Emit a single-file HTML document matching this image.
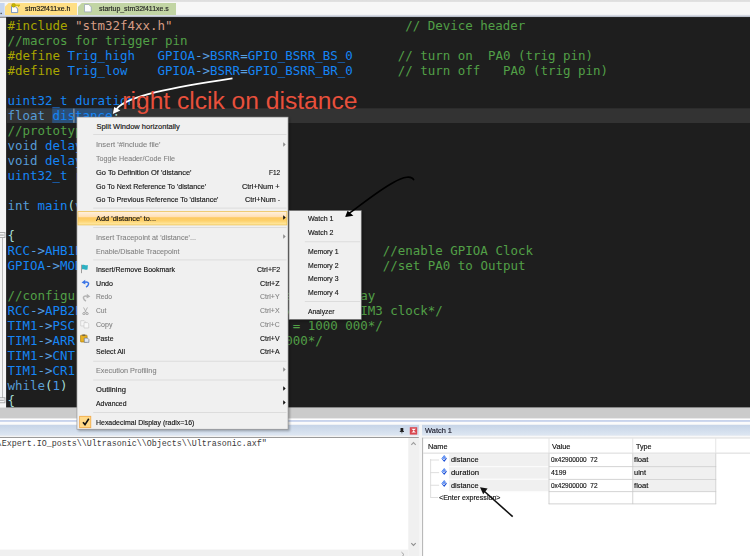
<!DOCTYPE html>
<html lang="en"><head><meta charset="utf-8"><title>Keil uVision - Add distance to Watch 1</title>
<style>
html,body{margin:0;padding:0}
body{width:750px;height:556px;overflow:hidden;position:relative;background:#f0f0f0;font-family:'Liberation Sans',sans-serif}
</style></head><body>
<div style="position:absolute;left:0;top:0;width:750px;height:18px;background:linear-gradient(#dedede 0,#e1e1e1 1.6px,#f7f7f7 2.3px,#f7f7f7 14.3px,#dde1ea 15.2px,#b9bfcb 16.5px,#4a4a4a 17.2px,#1e1e1e 17.7px,#1e1e1e 18px);transform:translate(0px,0px);transform-origin:0 0;"></div>
<div style="position:absolute;left:0;top:0;width:5px;height:12px;background:#c6d6ef;transform:translate(0px,3px) scale(0.92,1);transform-origin:0 0;"></div>
<div style="position:absolute;left:0;top:0;width:2px;height:2px;background:#444;transform:translate(0.5px,12.8px) scale(0.65,0.65);transform-origin:0 0;"></div>
<div style="position:absolute;left:4.8px;top:2.8px;width:72.5px;height:12.4px;background:#ffdf85;clip-path:polygon(4px 0,100% 0,100% 100%,0 100%,0 4px)"></div>
<div style="position:absolute;left:78px;top:2.8px;width:98px;height:12.4px;background:#c2d5a4;clip-path:polygon(4px 0,100% 0,100% 100%,0 100%,0 4px)"></div>
<svg style="position:absolute;left:11.3px;top:2.6px" width="16.7" height="12.6" viewBox="0 0 16.7 12.6"><path d="M0.5 3.5h3.7l2.5 2.5v3.5999999999999996h-6.2z" fill="#fdfdfd" stroke="#5b82c4" stroke-width="0.8"/><circle cx="2.6" cy="2.3" r="1.9" fill="#c9b800" stroke="#9a8c00" stroke-width="0.5"/><rect x="4" y="1.6" width="5" height="1.3" fill="#c9b800"/><rect x="7" y="2.5" width="1.2" height="1.3" fill="#c9b800"/></svg>
<svg style="position:absolute;left:84px;top:1.3px" width="17.3" height="13.9" viewBox="0 0 17.3 13.9"><path d="M0.5 3.5h4.3l2.5 2.5v4.9h-6.8z" fill="#fdfdfd" stroke="#9aa7b5" stroke-width="0.8"/></svg>
<div style="position:absolute;left:0;top:0;width:7px;height:391px;background:#f5f5f5;transform:translate(0px,17.5px) scale(0.88571,0.99795);transform-origin:0 0;"></div>
<div style="position:absolute;left:0;top:0;width:744px;height:391px;background:#1e1e1e;transform:translate(6.1px,17.4px) scale(0.99987,0.99821);transform-origin:0 0;"></div>
<div style="position:absolute;left:0;top:0;width:744px;height:15px;background:#333333;transform:translate(6.1px,108.3px) scale(0.99987,0.98);transform-origin:0 0;"></div>
<div style="position:absolute;left:0;top:0;width:60px;height:15px;background:#2b4f77;transform:translate(52.2px,108.3px) scale(1,0.98);transform-origin:0 0;"></div>
<div style="position:absolute;left:0;top:0;width:1px;height:15px;background:#a8a8a8;transform:translate(73.4px,108.6px) scale(1,0.94667);transform-origin:0 0;"></div>
<div style="position:absolute;left:0;top:0;width:1px;height:160px;background:#b4b4b4;transform:translate(2.1px,238px) scale(0.9,1);transform-origin:0 0;"></div>
<div style="position:absolute;left:0;top:0;width:6px;height:6px;background:#a6a6a6;transform:translate(0px,232.1px) scale(0.9,0.98333);transform-origin:0 0;"></div>
<div style="position:absolute;left:0;top:0;width:5px;height:5px;background:#f5f5f5;transform:translate(0px,233px) scale(0.9,0.82);transform-origin:0 0;"></div>
<div style="position:absolute;left:0;top:0;width:4px;height:1px;background:#9a9a9a;transform:translate(0px,234.6px) scale(0.95,0.9);transform-origin:0 0;"></div>
<div style="position:absolute;left:0;top:0;width:6px;height:6px;background:#a6a6a6;transform:translate(0px,397.3px) scale(0.9,0.98333);transform-origin:0 0;"></div>
<div style="position:absolute;left:0;top:0;width:5px;height:5px;background:#f5f5f5;transform:translate(0px,398.2px) scale(0.9,0.82);transform-origin:0 0;"></div>
<div style="position:absolute;left:0;top:0;width:4px;height:1px;background:#9a9a9a;transform:translate(0px,399.8px) scale(0.95,0.9);transform-origin:0 0;"></div>
<pre style="position:absolute;left:7.4px;top:18.0px;margin:0;font:12.47px/15.0px 'DejaVu Sans Mono', 'Liberation Mono', monospace;color:#dcdcdc;white-space:pre"><span style="color:#a9a600">#include </span><span style="color:#d69d85">&quot;stm32f4xx.h&quot;</span>                               <span style="color:#52a047">// Device header</span>
<span style="color:#52a047">//macros for trigger pin</span>
<span style="color:#a9a600">#define </span><span style="color:#1585f5">Trig_high   GPIOA</span><span style="color:#5aa0e0">-&gt;</span><span style="color:#1585f5">BSRR</span><span style="color:#5aa0e0">=</span><span style="color:#1585f5">GPIO_BSRR_BS_0</span>      <span style="color:#52a047">// turn on  PA0 (trig pin)</span>
<span style="color:#a9a600">#define </span><span style="color:#1585f5">Trig_low    GPIOA</span><span style="color:#5aa0e0">-&gt;</span><span style="color:#1585f5">BSRR</span><span style="color:#5aa0e0">=</span><span style="color:#1585f5">GPIO_BSRR_BR_0</span>      <span style="color:#52a047">// turn off   PA0 (trig pin)</span>

<span style="color:#1585f5">uint32_t duration</span><span style="color:#a4dcd4">;</span>
<span style="color:#569cd6">float </span><span style="color:#1585f5">distance</span><span style="color:#a4dcd4">;</span>
<span style="color:#52a047">//prototypes of the used functions</span>
<span style="color:#569cd6">void </span><span style="color:#1585f5">delaymS</span><span style="color:#a4dcd4">(</span><span style="color:#1585f5">uint32_t ms</span><span style="color:#a4dcd4">);</span>
<span style="color:#569cd6">void </span><span style="color:#1585f5">delayuS</span><span style="color:#a4dcd4">(</span><span style="color:#1585f5">uint32_t us</span><span style="color:#a4dcd4">);</span>
<span style="color:#1585f5">uint32_t read_echo</span><span style="color:#a4dcd4">(</span><span style="color:#1585f5">uint32_t timeout</span><span style="color:#a4dcd4">);</span>

<span style="color:#569cd6">int </span><span style="color:#1585f5">main</span><span style="color:#a4dcd4">(</span><span style="color:#569cd6">void</span><span style="color:#a4dcd4">)</span>

<span style="color:#a4dcd4">{</span>
<span style="color:#1585f5">RCC</span><span style="color:#5aa0e0">-&gt;</span><span style="color:#1585f5">AHB1ENR </span><span style="color:#5aa0e0">|=</span><span style="color:#1585f5">RCC_AHB1ENR_GPIOAEN</span><span style="color:#a4dcd4">;</span>               <span style="color:#52a047">//enable GPIOA Clock</span>
<span style="color:#1585f5">GPIOA</span><span style="color:#5aa0e0">-&gt;</span><span style="color:#1585f5">MODER </span><span style="color:#5aa0e0">|=</span><span style="color:#a4dcd4">(</span><span style="color:#4a9ae8">1</span><span style="color:#5aa0e0">&lt;&lt;</span><span style="color:#4a9ae8">0</span><span style="color:#a4dcd4">);</span>                            <span style="color:#52a047">//set PA0 to Output</span>

<span style="color:#52a047">//configure Timer1 to generate microseconds delay</span>
<span style="color:#1585f5">RCC</span><span style="color:#5aa0e0">-&gt;</span><span style="color:#1585f5">APB2ENR </span><span style="color:#5aa0e0">|=</span><span style="color:#1585f5">RCC_APB2ENR_TIM1EN</span><span style="color:#a4dcd4">;</span>   <span style="color:#52a047">/*Enable TIM3 clock*/</span>
<span style="color:#1585f5">TIM1</span><span style="color:#5aa0e0">-&gt;</span><span style="color:#1585f5">PSC </span><span style="color:#5aa0e0">= </span><span style="color:#4a9ae8">16 </span><span style="color:#5aa0e0">-</span><span style="color:#4a9ae8">1</span><span style="color:#a4dcd4">;</span>  <span style="color:#52a047">/* 16 000 000 /16 = 1000 000*/</span>
<span style="color:#1585f5">TIM1</span><span style="color:#5aa0e0">-&gt;</span><span style="color:#1585f5">ARR </span><span style="color:#5aa0e0">= </span><span style="color:#4a9ae8">1000000</span><span style="color:#a4dcd4">;</span>   <span style="color:#52a047">/* 1 s = 1000 000*/</span>
<span style="color:#1585f5">TIM1</span><span style="color:#5aa0e0">-&gt;</span><span style="color:#1585f5">CNT </span><span style="color:#5aa0e0">=</span><span style="color:#4a9ae8">0</span><span style="color:#a4dcd4">;</span>
<span style="color:#1585f5">TIM1</span><span style="color:#5aa0e0">-&gt;</span><span style="color:#1585f5">CR1 </span><span style="color:#5aa0e0">=</span><span style="color:#4a9ae8">1</span><span style="color:#a4dcd4">;</span>
<span style="color:#569cd6">while</span><span style="color:#a4dcd4">(</span><span style="color:#4a9ae8">1</span><span style="color:#a4dcd4">)</span>
<span style="color:#a4dcd4">{</span></pre>
<div style="position:absolute;left:0;top:0;width:750px;height:11px;background:#cbcbcb;transform:translate(0px,407.6px) scale(1,0.99091);transform-origin:0 0;"></div>
<div style="position:absolute;left:0;top:0;width:750px;height:4px;background:linear-gradient(#f2f2f4 0,#ffffff 20%,#ffffff 48%,#c2cfea 60%,#c6d2ec 100%);transform:translate(0px,418.5px) scale(1,0.85);transform-origin:0 0;"></div>
<div style="position:absolute;left:0;top:0;width:750px;height:3px;background:#fbfbfb;transform:translate(0px,421.9px) scale(1,0.96667);transform-origin:0 0;"></div>
<div style="position:absolute;left:0;top:0;width:420px;height:11px;background:linear-gradient(#c6d4e7,#dee7f2);transform:translate(0px,424.8px) scale(0.99905,1);transform-origin:0 0;"></div>
<div style="position:absolute;left:0;top:0;width:420px;height:2px;background:#f4f4f4;transform:translate(0px,435.8px) scale(0.99905,0.65);transform-origin:0 0;"></div>
<div style="position:absolute;left:0;top:0;width:419px;height:2px;background:linear-gradient(#858585,#b0b0b0);transform:translate(0px,437.1px) scale(0.99952,0.7);transform-origin:0 0;"></div>
<div style="position:absolute;left:0;top:0;width:420px;height:118px;background:#ffffff;transform:translate(0px,438px) scale(0.99857,1);transform-origin:0 0;"></div>
<div style="position:absolute;left:0;top:0;width:11px;height:118px;background:#f0f0f0;transform:translate(408.3px,438px) scale(0.98182,1);transform-origin:0 0;"></div>
<div style="position:absolute;left:0;top:0;width:4px;height:132px;background:#f6f6f6;transform:translate(419.1px,424.4px) scale(0.8,1);transform-origin:0 0;"></div>
<div style="position:absolute;left:0;top:0;width:328px;height:11px;background:linear-gradient(#c6d4e7,#dee7f2);transform:translate(422px,424.8px);transform-origin:0 0;"></div>
<div style="position:absolute;left:0;top:0;width:328px;height:2px;background:#f8f8f8;transform:translate(422px,435.8px);transform-origin:0 0;"></div>
<div style="position:absolute;left:0;top:0;width:329px;height:119px;background:#ffffff;transform:translate(421.8px,437.6px) scale(0.99757,1);transform-origin:0 0;"></div>
<div style="position:absolute;left:0;top:0;width:329px;height:1px;background:#d2d2d2;transform:translate(421.8px,437.6px) scale(0.99757,0.8);transform-origin:0 0;"></div>
<div style="position:absolute;left:0;top:0;width:1px;height:119px;background:#b2b2b2;transform:translate(422.1px,437.8px);transform-origin:0 0;"></div>
<svg style="position:absolute;left:398px;top:426px" width="8" height="9" viewBox="0 0 8 9"><rect x="2.5" y="2" width="2.8" height="3.2" rx="0.6" fill="#1c1c1c"/><rect x="1.8" y="5" width="4.2" height="0.9" fill="#1c1c1c"/><rect x="3.55" y="5.9" width="0.7" height="1.5" fill="#333"/></svg>
<div style="position:absolute;left:0;top:0;width:8px;height:8px;background:#d9484f;transform:translate(409.8px,427.2px) scale(0.925,0.925);transform-origin:0 0;"></div>
<svg style="position:absolute;left:409.8px;top:427.2px" width="7.4" height="7.4" viewBox="0 0 7.4 7.4"><path d="M1.4 1.8h4.6L3.7 3.7zM1.4 5.6h4.6L3.7 3.7z" fill="#fff"/></svg>
<div style="position:absolute;left:0;top:0;width:409px;height:7px;background:#f0f0f0;transform:translate(0px,549.6px) scale(0.99829,0.91429);transform-origin:0 0;"></div>
<svg style="position:absolute;left:409.7px;top:440.9px" width="7" height="5" viewBox="0 0 7 5"><path d="M1.3 3.8 L3.5 1.6 L5.7 3.8" fill="none" stroke="#9c9c9c" stroke-width="1.1"/></svg>
<svg style="position:absolute;left:409.7px;top:541.6px" width="7" height="5" viewBox="0 0 7 5"><path d="M1.3 1.2 L3.5 3.4 L5.7 1.2" fill="none" stroke="#8e8e8e" stroke-width="1.1"/></svg>
<svg style="position:absolute;left:400.3px;top:551.3px" width="6" height="7" viewBox="0 0 6 7"><path d="M1.5 1.2 L4 3.6 L1.5 6" fill="none" stroke="#a0a0a0" stroke-width="1"/></svg>
<div style="position:absolute;left:0;top:0;width:327px;height:1px;background:#cfcfcf;transform:translate(423.2px,452.7px) scale(1,0.8);transform-origin:0 0;"></div>
<div style="position:absolute;left:0;top:0;width:1px;height:15px;background:#dedede;transform:translate(548.6px,438.4px) scale(0.8,0.96667);transform-origin:0 0;"></div>
<div style="position:absolute;left:0;top:0;width:1px;height:15px;background:#dedede;transform:translate(632.4px,438.4px) scale(0.8,0.96667);transform-origin:0 0;"></div>
<div style="position:absolute;left:0;top:0;width:1px;height:15px;background:#dedede;transform:translate(715.4px,438.4px) scale(0.8,0.96667);transform-origin:0 0;"></div>
<div style="position:absolute;left:0;top:0;width:100px;height:12px;background:#f0f0f0;transform:translate(449px,454.1px) scale(0.996,1);transform-origin:0 0;"></div>
<div style="position:absolute;left:0;top:0;width:83px;height:12px;background:#f0f0f0;transform:translate(633.2px,454.1px) scale(0.99036,1);transform-origin:0 0;"></div>
<div style="position:absolute;left:0;top:0;width:100px;height:12px;background:#f0f0f0;transform:translate(449px,466.9px) scale(0.996,0.98333);transform-origin:0 0;"></div>
<div style="position:absolute;left:0;top:0;width:83px;height:12px;background:#f0f0f0;transform:translate(633.2px,466.9px) scale(0.99036,0.98333);transform-origin:0 0;"></div>
<div style="position:absolute;left:0;top:0;width:100px;height:12px;background:#f0f0f0;transform:translate(449px,479.5px) scale(0.996,0.96667);transform-origin:0 0;"></div>
<div style="position:absolute;left:0;top:0;width:83px;height:12px;background:#f0f0f0;transform:translate(633.2px,479.5px) scale(0.99036,0.96667);transform-origin:0 0;"></div>
<div style="position:absolute;left:0;top:0;width:168px;height:1px;background:#c8c8c8;transform:translate(548.6px,466.3px) scale(0.99762,0.8);transform-origin:0 0;"></div>
<div style="position:absolute;left:0;top:0;width:168px;height:1px;background:#c8c8c8;transform:translate(548.6px,478.9px) scale(0.99762,0.8);transform-origin:0 0;"></div>
<div style="position:absolute;left:0;top:0;width:168px;height:1px;background:#c8c8c8;transform:translate(548.6px,491.3px) scale(0.99762,0.8);transform-origin:0 0;"></div>
<div style="position:absolute;left:0;top:0;width:168px;height:1px;background:#c8c8c8;transform:translate(548.6px,503.5px) scale(0.99762,0.8);transform-origin:0 0;"></div>
<div style="position:absolute;left:0;top:0;width:100px;height:1px;background:#fbfbfb;transform:translate(449px,466.2px) scale(0.996,1);transform-origin:0 0;"></div>
<div style="position:absolute;left:0;top:0;width:100px;height:1px;background:#fbfbfb;transform:translate(449px,478.8px) scale(0.996,1);transform-origin:0 0;"></div>
<div style="position:absolute;left:0;top:0;width:100px;height:1px;background:#fbfbfb;transform:translate(449px,491.2px) scale(0.996,1);transform-origin:0 0;"></div>
<div style="position:absolute;left:0;top:0;width:1px;height:51px;background:#c8c8c8;transform:translate(548.6px,453.5px) scale(0.8,0.99216);transform-origin:0 0;"></div>
<div style="position:absolute;left:0;top:0;width:1px;height:51px;background:#c8c8c8;transform:translate(632.4px,453.5px) scale(0.8,0.99216);transform-origin:0 0;"></div>
<div style="position:absolute;left:0;top:0;width:1px;height:51px;background:#c8c8c8;transform:translate(715.4px,453.5px) scale(0.8,0.99216);transform-origin:0 0;"></div>
<div style="position:absolute;left:0;top:0;width:1px;height:39px;background:#d6d6d6;transform:translate(430.3px,459px) scale(0.8,0.98718);transform-origin:0 0;"></div>
<div style="position:absolute;left:0;top:0;width:9px;height:1px;background:#d6d6d6;transform:translate(430.3px,459.6px) scale(0.97778,0.8);transform-origin:0 0;"></div>
<div style="position:absolute;left:0;top:0;width:9px;height:1px;background:#d6d6d6;transform:translate(430.3px,472.3px) scale(0.97778,0.8);transform-origin:0 0;"></div>
<div style="position:absolute;left:0;top:0;width:9px;height:1px;background:#d6d6d6;transform:translate(430.3px,484.8px) scale(0.97778,0.8);transform-origin:0 0;"></div>
<div style="position:absolute;left:0;top:0;width:8px;height:1px;background:#d6d6d6;transform:translate(430.3px,497.1px) scale(0.975,0.8);transform-origin:0 0;"></div>
<svg style="position:absolute;left:440.6px;top:455px" width="6.4" height="7.4" viewBox="0 0 6.4 7.4"><path d="M3.2 0.3 L5.9 3.4 L3.2 6.9 L0.5 3.4z" fill="#1a4fd6"/><path d="M3.2 0.3 L4.6 1.9 L1.6 4.6 L0.5 3.4z" fill="#6c9cf8"/><path d="M2 3.6 L3 4.9 L4.8 2.4" fill="none" stroke="#fff" stroke-width="0.9"/></svg>
<svg style="position:absolute;left:440.6px;top:467.5px" width="6.4" height="7.4" viewBox="0 0 6.4 7.4"><path d="M3.2 0.3 L5.9 3.4 L3.2 6.9 L0.5 3.4z" fill="#1a4fd6"/><path d="M3.2 0.3 L4.6 1.9 L1.6 4.6 L0.5 3.4z" fill="#6c9cf8"/><path d="M2 3.6 L3 4.9 L4.8 2.4" fill="none" stroke="#fff" stroke-width="0.9"/></svg>
<svg style="position:absolute;left:440.6px;top:480.2px" width="6.4" height="7.4" viewBox="0 0 6.4 7.4"><path d="M3.2 0.3 L5.9 3.4 L3.2 6.9 L0.5 3.4z" fill="#1a4fd6"/><path d="M3.2 0.3 L4.6 1.9 L1.6 4.6 L0.5 3.4z" fill="#6c9cf8"/><path d="M2 3.6 L3 4.9 L4.8 2.4" fill="none" stroke="#fff" stroke-width="0.9"/></svg>
<div style="position:absolute;left:0;top:0;width:212px;height:313px;background:rgba(0,0,0,0.28);transform:translate(78.1px,118.3px) scale(0.99906,0.99936);transform-origin:0 0;filter:blur(1.2px)"></div>
<div style="position:absolute;left:0;top:0;width:212px;height:313px;background:#9c9c9c;transform:translate(76.6px,116.8px) scale(0.99906,0.99936);transform-origin:0 0;"></div>
<div style="position:absolute;left:0;top:0;width:211px;height:312px;background:#f0f0f0;transform:translate(77.3px,117.5px) scale(0.99716,0.99808);transform-origin:0 0;"></div>
<div style="position:absolute;left:0;top:0;width:210px;height:15px;background:#efc255;transform:translate(77.5px,211.2px) scale(0.99905,0.94);transform-origin:0 0;"></div>
<div style="position:absolute;left:0;top:0;width:209px;height:13px;background:linear-gradient(#ffefdc 0,#ffe0b4 38%,#fdc962 46%,#fdd16c 70%,#ffeaa4 100%);transform:translate(78.3px,212px) scale(0.99617,0.96154);transform-origin:0 0;"></div>
<svg style="position:absolute;left:283px;top:141.7px" width="3" height="5" viewBox="0 0 3 5"><path d="M0.2 0.3 L2.7 2.5 L0.2 4.7z" fill="#8c8c8c"/></svg>
<svg style="position:absolute;left:283px;top:215.39999999999998px" width="3" height="5" viewBox="0 0 3 5"><path d="M0.2 0.3 L2.7 2.5 L0.2 4.7z" fill="#111"/></svg>
<svg style="position:absolute;left:283px;top:234.2px" width="3" height="5" viewBox="0 0 3 5"><path d="M0.2 0.3 L2.7 2.5 L0.2 4.7z" fill="#8c8c8c"/></svg>
<svg style="position:absolute;left:283px;top:367.4px" width="3" height="5" viewBox="0 0 3 5"><path d="M0.2 0.3 L2.7 2.5 L0.2 4.7z" fill="#8c8c8c"/></svg>
<svg style="position:absolute;left:283px;top:386.2px" width="3" height="5" viewBox="0 0 3 5"><path d="M0.2 0.3 L2.7 2.5 L0.2 4.7z" fill="#111"/></svg>
<svg style="position:absolute;left:283px;top:399.9px" width="3" height="5" viewBox="0 0 3 5"><path d="M0.2 0.3 L2.7 2.5 L0.2 4.7z" fill="#111"/></svg>
<div style="position:absolute;left:0;top:0;width:194px;height:1px;background:#d7d7d7;transform:translate(93.2px,134px) scale(0.99639,0.8);transform-origin:0 0;"></div>
<div style="position:absolute;left:0;top:0;width:194px;height:1px;background:#d7d7d7;transform:translate(93.2px,207.7px) scale(0.99639,0.8);transform-origin:0 0;"></div>
<div style="position:absolute;left:0;top:0;width:194px;height:1px;background:#d7d7d7;transform:translate(93.2px,227.1px) scale(0.99639,0.8);transform-origin:0 0;"></div>
<div style="position:absolute;left:0;top:0;width:194px;height:1px;background:#d7d7d7;transform:translate(93.2px,259.5px) scale(0.99639,0.8);transform-origin:0 0;"></div>
<div style="position:absolute;left:0;top:0;width:194px;height:1px;background:#d7d7d7;transform:translate(93.2px,360.8px) scale(0.99639,0.8);transform-origin:0 0;"></div>
<div style="position:absolute;left:0;top:0;width:194px;height:1px;background:#d7d7d7;transform:translate(93.2px,379.6px) scale(0.99639,0.8);transform-origin:0 0;"></div>
<div style="position:absolute;left:0;top:0;width:194px;height:1px;background:#d7d7d7;transform:translate(93.2px,412.2px) scale(0.99639,0.8);transform-origin:0 0;"></div>
<svg style="position:absolute;left:80.2px;top:264.4px" width="9.2" height="10.1" viewBox="0 0 10 11"><rect x="1.2" y="0.8" width="0.9" height="9.2" fill="#8a8a8a"/><path d="M2.2 1 C4 0.2 5.5 2 8.6 1.2 L8.2 6 C5.6 6.8 4 5 2.2 5.8z" fill="#2cb0c2"/></svg>
<svg style="position:absolute;left:80.5px;top:278.8px" width="10" height="9" viewBox="0 0 10 9"><g><path d="M3.2 3.4 C6.2 2.2 8.2 3.6 7.4 5.6 C7 6.8 6 7.6 5 8" fill="none" stroke="#3a74e6" stroke-width="1.5"/><path d="M0.6 3.6 L4.2 0.8 L4.4 5.4z" fill="#3a74e6"/></g></svg>
<svg style="position:absolute;left:80.5px;top:292.6px" width="10" height="9" viewBox="0 0 10 9"><g transform="translate(10,0) scale(-1,1)"><path d="M3.2 3.4 C6.2 2.2 8.2 3.6 7.4 5.6 C7 6.8 6 7.6 5 8" fill="none" stroke="#b4b4b4" stroke-width="1.5"/><path d="M0.6 3.6 L4.2 0.8 L4.4 5.4z" fill="#b4b4b4"/></g></svg>
<svg style="position:absolute;left:81.7px;top:306.6px" width="7" height="8.8" viewBox="0 0 8 10"><path d="M1.8 0.5 L5 6.5 M6.2 0.5 L3 6.5" stroke="#aaaaaa" stroke-width="1" fill="none"/><circle cx="2.2" cy="7.6" r="1.3" fill="none" stroke="#9c9c9c" stroke-width="1"/><circle cx="5.8" cy="7.6" r="1.3" fill="none" stroke="#9c9c9c" stroke-width="1"/></svg>
<svg style="position:absolute;left:80.1px;top:320.3px" width="9.6" height="8.7" viewBox="0 0 11 10"><path d="M0.8 0.8h4l1.4 1.4v4.6h-5.4z" fill="#f6f6f6" stroke="#c4c4c4" stroke-width="0.7"/><path d="M4.6 3h4l1.4 1.4v4.8h-5.4z" fill="#f8f8f8" stroke="#c4c4c4" stroke-width="0.7"/></svg>
<svg style="position:absolute;left:80.1px;top:333.8px" width="9.8" height="8.9" viewBox="0 0 11 10"><rect x="0.6" y="1.4" width="7.4" height="7.6" rx="0.6" fill="#e8b020" stroke="#a87808" stroke-width="0.7"/><rect x="2.6" y="0.5" width="3.4" height="1.8" fill="#7a6a40"/><path d="M4.8 4.6h3.6l1.6 1.6v3.2h-5.2z" fill="#dfe6f2" stroke="#5a6a86" stroke-width="0.7"/></svg>
<div style="position:absolute;left:0;top:0;width:12px;height:13px;background:#f0a84a;transform:translate(79.2px,415.9px) scale(1,0.93846);transform-origin:0 0;"></div>
<div style="position:absolute;left:0;top:0;width:11px;height:11px;background:#ffd987;transform:translate(80px,416.7px) scale(0.94545,0.96364);transform-origin:0 0;"></div>
<svg style="position:absolute;left:81.5px;top:418px" width="8" height="8" viewBox="0 0 8 8"><path d="M1 4.2 L3 6.6 L6.8 0.8" fill="none" stroke="#111" stroke-width="1.6"/></svg>
<div style="position:absolute;left:0;top:0;width:73px;height:110px;background:rgba(0,0,0,0.28);transform:translate(290.3px,211.8px) scale(0.99726,0.99455);transform-origin:0 0;filter:blur(1.2px)"></div>
<div style="position:absolute;left:0;top:0;width:73px;height:110px;background:#9c9c9c;transform:translate(288.8px,210.3px) scale(0.99726,0.99455);transform-origin:0 0;"></div>
<div style="position:absolute;left:0;top:0;width:72px;height:108px;background:#f0f0f0;transform:translate(289.5px,211px) scale(0.99167,1);transform-origin:0 0;"></div>
<div style="position:absolute;left:0;top:0;width:56px;height:1px;background:#d7d7d7;transform:translate(304.8px,241.4px) scale(0.98929,0.8);transform-origin:0 0;"></div>
<div style="position:absolute;left:0;top:0;width:56px;height:1px;background:#d7d7d7;transform:translate(304.8px,301.1px) scale(0.98929,0.8);transform-origin:0 0;"></div>
<svg style="position:absolute;left:0;top:0" width="750" height="556" viewBox="0 0 750 556"><path d="M232.5 78.4 C172.5 87.4 127 96 116.5 109" fill="none" stroke="#fff" stroke-width="1.7"/><path d="M112.8 113.9 L114.2 107 L120.4 110.4z" fill="#fff"/><path d="M413.9 180.2 C412 175.5 404 176 392.9 182.7 C378 191 362 204 349 213.5" fill="none" stroke="#000" stroke-width="1.6"/><path d="M345.1 217 L347.6 210.8 L353.4 215.8z" fill="#000"/><path d="M512.7 516.7 L484 491" fill="none" stroke="#111" stroke-width="1.6"/><path d="M480 487.3 L487.6 488.6 L483.2 494.2z" fill="#111"/></svg>
<div style="position:absolute;left:25.3px;top:4.33px;font:normal 7.5px 'Liberation Sans', sans-serif;line-height:9.75px;color:#111;white-space:pre;transform:scaleX(0.9334);transform-origin:0 0;-webkit-text-stroke:0.15px #111;">stm32f411xe.h</div>
<div style="position:absolute;left:98.7px;top:4.33px;font:normal 7.5px 'Liberation Sans', sans-serif;line-height:9.75px;color:#222;white-space:pre;transform:scaleX(0.9266);transform-origin:0 0;-webkit-text-stroke:0.15px #222;">startup_stm32f411xe.s</div>
<div style="position:absolute;left:425.2px;top:426.43px;font:normal 7.5px 'Liberation Sans', sans-serif;line-height:9.75px;color:#1a1a2a;white-space:pre;transform:scaleX(0.9914);transform-origin:0 0;-webkit-text-stroke:0.15px #1a1a2a;">Watch 1</div>
<div style="position:absolute;left:-3.2px;top:438.57px;font:normal 8.33px 'Liberation Mono', monospace;line-height:10.83px;color:#3a3a3a;white-space:pre;">\Expert.IO_posts\\Ultrasonic\\Objects\\Ultrasonic.axf&quot;</div>
<div style="position:absolute;left:427.5px;top:442.43px;font:normal 7.5px 'Liberation Sans', sans-serif;line-height:9.75px;color:#111;white-space:pre;transform:scaleX(0.9742);transform-origin:0 0;-webkit-text-stroke:0.15px #111;">Name</div>
<div style="position:absolute;left:552.2px;top:442.43px;font:normal 7.5px 'Liberation Sans', sans-serif;line-height:9.75px;color:#111;white-space:pre;transform:scaleX(0.9925);transform-origin:0 0;-webkit-text-stroke:0.15px #111;">Value</div>
<div style="position:absolute;left:635.5px;top:442.43px;font:normal 7.5px 'Liberation Sans', sans-serif;line-height:9.75px;color:#111;white-space:pre;transform:scaleX(0.9529);transform-origin:0 0;-webkit-text-stroke:0.15px #111;">Type</div>
<div style="position:absolute;left:451.3px;top:455.43px;font:normal 7.5px 'Liberation Sans', sans-serif;line-height:9.75px;color:#111;white-space:pre;transform:scaleX(0.9843);transform-origin:0 0;-webkit-text-stroke:0.15px #111;">distance</div>
<div style="position:absolute;left:551px;top:455.43px;font:normal 7.5px 'Liberation Sans', sans-serif;line-height:9.75px;color:#111;white-space:pre;transform:scaleX(0.8641);transform-origin:0 0;-webkit-text-stroke:0.15px #111;">0x42900000  72</div>
<div style="position:absolute;left:634.4px;top:455.43px;font:normal 7.5px 'Liberation Sans', sans-serif;line-height:9.75px;color:#111;white-space:pre;transform:scaleX(1.0220);transform-origin:0 0;-webkit-text-stroke:0.15px #111;">float</div>
<div style="position:absolute;left:451.3px;top:467.93px;font:normal 7.5px 'Liberation Sans', sans-serif;line-height:9.75px;color:#111;white-space:pre;transform:scaleX(1.0329);transform-origin:0 0;-webkit-text-stroke:0.15px #111;">duration</div>
<div style="position:absolute;left:551px;top:467.93px;font:normal 7.5px 'Liberation Sans', sans-serif;line-height:9.75px;color:#111;white-space:pre;transform:scaleX(0.9288);transform-origin:0 0;-webkit-text-stroke:0.15px #111;">4199</div>
<div style="position:absolute;left:634.4px;top:467.93px;font:normal 7.5px 'Liberation Sans', sans-serif;line-height:9.75px;color:#111;white-space:pre;transform:scaleX(0.9922);transform-origin:0 0;-webkit-text-stroke:0.15px #111;">uint</div>
<div style="position:absolute;left:451.3px;top:480.63px;font:normal 7.5px 'Liberation Sans', sans-serif;line-height:9.75px;color:#111;white-space:pre;transform:scaleX(0.9843);transform-origin:0 0;-webkit-text-stroke:0.15px #111;">distance</div>
<div style="position:absolute;left:551px;top:480.63px;font:normal 7.5px 'Liberation Sans', sans-serif;line-height:9.75px;color:#111;white-space:pre;transform:scaleX(0.8641);transform-origin:0 0;-webkit-text-stroke:0.15px #111;">0x42900000  72</div>
<div style="position:absolute;left:634.4px;top:480.63px;font:normal 7.5px 'Liberation Sans', sans-serif;line-height:9.75px;color:#111;white-space:pre;transform:scaleX(1.0220);transform-origin:0 0;-webkit-text-stroke:0.15px #111;">float</div>
<div style="position:absolute;left:438.8px;top:492.83px;font:normal 7.5px 'Liberation Sans', sans-serif;line-height:9.75px;color:#111;white-space:pre;transform:scaleX(0.9455);transform-origin:0 0;-webkit-text-stroke:0.15px #111;">&lt;Enter expression&gt;</div>
<div style="position:absolute;left:96.4px;top:121.73px;font:normal 7.5px 'Liberation Sans', sans-serif;line-height:9.75px;color:#151515;white-space:pre;-webkit-text-stroke:0.15px #151515;">Split Window horizontally</div>
<div style="position:absolute;left:96.4px;top:140.43px;font:normal 7.5px 'Liberation Sans', sans-serif;line-height:9.75px;color:#808080;white-space:pre;transform:scaleX(1.0185);transform-origin:0 0;-webkit-text-stroke:0.08px #808080;">Insert &#x27;#include file&#x27;</div>
<div style="position:absolute;left:96.4px;top:154.23px;font:normal 7.5px 'Liberation Sans', sans-serif;line-height:9.75px;color:#808080;white-space:pre;transform:scaleX(0.9522);transform-origin:0 0;-webkit-text-stroke:0.08px #808080;">Toggle Header/Code File</div>
<div style="position:absolute;left:96.4px;top:167.93px;font:normal 7.5px 'Liberation Sans', sans-serif;line-height:9.75px;color:#151515;white-space:pre;transform:scaleX(0.9937);transform-origin:0 0;-webkit-text-stroke:0.15px #151515;">Go To Definition Of &#x27;distance&#x27;</div>
<div style="position:absolute;left:268.8px;top:167.93px;font:normal 7.5px 'Liberation Sans', sans-serif;line-height:9.75px;color:#151515;white-space:pre;transform:scaleX(0.8657);transform-origin:0 0;-webkit-text-stroke:0.15px #151515;">F12</div>
<div style="position:absolute;left:96.4px;top:181.63px;font:normal 7.5px 'Liberation Sans', sans-serif;line-height:9.75px;color:#151515;white-space:pre;transform:scaleX(0.9416);transform-origin:0 0;-webkit-text-stroke:0.15px #151515;">Go To Next Reference To &#x27;distance&#x27;</div>
<div style="position:absolute;left:242.4px;top:181.63px;font:normal 7.5px 'Liberation Sans', sans-serif;line-height:9.75px;color:#151515;white-space:pre;transform:scaleX(0.9806);transform-origin:0 0;-webkit-text-stroke:0.15px #151515;">Ctrl+Num +</div>
<div style="position:absolute;left:96.4px;top:195.33px;font:normal 7.5px 'Liberation Sans', sans-serif;line-height:9.75px;color:#151515;white-space:pre;transform:scaleX(0.9374);transform-origin:0 0;-webkit-text-stroke:0.15px #151515;">Go To Previous Reference To &#x27;distance&#x27;</div>
<div style="position:absolute;left:244.8px;top:195.33px;font:normal 7.5px 'Liberation Sans', sans-serif;line-height:9.75px;color:#151515;white-space:pre;transform:scaleX(0.9652);transform-origin:0 0;-webkit-text-stroke:0.15px #151515;">Ctrl+Num -</div>
<div style="position:absolute;left:96.4px;top:214.13px;font:normal 7.5px 'Liberation Sans', sans-serif;line-height:9.75px;color:#151515;white-space:pre;transform:scaleX(0.9864);transform-origin:0 0;-webkit-text-stroke:0.15px #151515;">Add &#x27;distance&#x27; to...</div>
<div style="position:absolute;left:96.4px;top:232.93px;font:normal 7.5px 'Liberation Sans', sans-serif;line-height:9.75px;color:#808080;white-space:pre;transform:scaleX(0.9676);transform-origin:0 0;-webkit-text-stroke:0.08px #808080;">Insert Tracepoint at &#x27;distance&#x27;...</div>
<div style="position:absolute;left:96.4px;top:246.63px;font:normal 7.5px 'Liberation Sans', sans-serif;line-height:9.75px;color:#808080;white-space:pre;transform:scaleX(0.9536);transform-origin:0 0;-webkit-text-stroke:0.08px #808080;">Enable/Disable Tracepoint</div>
<div style="position:absolute;left:96.4px;top:264.93px;font:normal 7.5px 'Liberation Sans', sans-serif;line-height:9.75px;color:#151515;white-space:pre;transform:scaleX(0.9335);transform-origin:0 0;-webkit-text-stroke:0.15px #151515;">Insert/Remove Bookmark</div>
<div style="position:absolute;left:256.8px;top:264.93px;font:normal 7.5px 'Liberation Sans', sans-serif;line-height:9.75px;color:#151515;white-space:pre;transform:scaleX(0.9356);transform-origin:0 0;-webkit-text-stroke:0.15px #151515;">Ctrl+F2</div>
<div style="position:absolute;left:96.4px;top:278.63px;font:normal 7.5px 'Liberation Sans', sans-serif;line-height:9.75px;color:#151515;white-space:pre;transform:scaleX(0.9477);transform-origin:0 0;-webkit-text-stroke:0.15px #151515;">Undo</div>
<div style="position:absolute;left:260.4px;top:278.63px;font:normal 7.5px 'Liberation Sans', sans-serif;line-height:9.75px;color:#151515;white-space:pre;transform:scaleX(0.9503);transform-origin:0 0;-webkit-text-stroke:0.15px #151515;">Ctrl+Z</div>
<div style="position:absolute;left:96.4px;top:292.43px;font:normal 7.5px 'Liberation Sans', sans-serif;line-height:9.75px;color:#808080;white-space:pre;transform:scaleX(0.8920);transform-origin:0 0;-webkit-text-stroke:0.08px #808080;">Redo</div>
<div style="position:absolute;left:260.4px;top:292.43px;font:normal 7.5px 'Liberation Sans', sans-serif;line-height:9.75px;color:#808080;white-space:pre;transform:scaleX(0.9313);transform-origin:0 0;-webkit-text-stroke:0.08px #808080;">Ctrl+Y</div>
<div style="position:absolute;left:96.4px;top:306.13px;font:normal 7.5px 'Liberation Sans', sans-serif;line-height:9.75px;color:#808080;white-space:pre;transform:scaleX(0.8996);transform-origin:0 0;-webkit-text-stroke:0.08px #808080;">Cut</div>
<div style="position:absolute;left:260.4px;top:306.13px;font:normal 7.5px 'Liberation Sans', sans-serif;line-height:9.75px;color:#808080;white-space:pre;transform:scaleX(0.9313);transform-origin:0 0;-webkit-text-stroke:0.08px #808080;">Ctrl+X</div>
<div style="position:absolute;left:96.4px;top:319.93px;font:normal 7.5px 'Liberation Sans', sans-serif;line-height:9.75px;color:#808080;white-space:pre;transform:scaleX(0.9420);transform-origin:0 0;-webkit-text-stroke:0.08px #808080;">Copy</div>
<div style="position:absolute;left:260.4px;top:319.93px;font:normal 7.5px 'Liberation Sans', sans-serif;line-height:9.75px;color:#808080;white-space:pre;transform:scaleX(0.9130);transform-origin:0 0;-webkit-text-stroke:0.08px #808080;">Ctrl+C</div>
<div style="position:absolute;left:96.4px;top:333.63px;font:normal 7.5px 'Liberation Sans', sans-serif;line-height:9.75px;color:#151515;white-space:pre;transform:scaleX(0.9121);transform-origin:0 0;-webkit-text-stroke:0.15px #151515;">Paste</div>
<div style="position:absolute;left:260.4px;top:333.63px;font:normal 7.5px 'Liberation Sans', sans-serif;line-height:9.75px;color:#151515;white-space:pre;transform:scaleX(0.9313);transform-origin:0 0;-webkit-text-stroke:0.15px #151515;">Ctrl+V</div>
<div style="position:absolute;left:96.4px;top:347.43px;font:normal 7.5px 'Liberation Sans', sans-serif;line-height:9.75px;color:#151515;white-space:pre;transform:scaleX(0.9397);transform-origin:0 0;-webkit-text-stroke:0.15px #151515;">Select All</div>
<div style="position:absolute;left:260.4px;top:347.43px;font:normal 7.5px 'Liberation Sans', sans-serif;line-height:9.75px;color:#151515;white-space:pre;transform:scaleX(0.9313);transform-origin:0 0;-webkit-text-stroke:0.15px #151515;">Ctrl+A</div>
<div style="position:absolute;left:96.4px;top:366.13px;font:normal 7.5px 'Liberation Sans', sans-serif;line-height:9.75px;color:#808080;white-space:pre;transform:scaleX(0.9738);transform-origin:0 0;-webkit-text-stroke:0.08px #808080;">Execution Profiling</div>
<div style="position:absolute;left:96.4px;top:384.93px;font:normal 7.5px 'Liberation Sans', sans-serif;line-height:9.75px;color:#151515;white-space:pre;transform:scaleX(1.0132);transform-origin:0 0;-webkit-text-stroke:0.15px #151515;">Outlining</div>
<div style="position:absolute;left:96.4px;top:398.63px;font:normal 7.5px 'Liberation Sans', sans-serif;line-height:9.75px;color:#151515;white-space:pre;transform:scaleX(0.9143);transform-origin:0 0;-webkit-text-stroke:0.15px #151515;">Advanced</div>
<div style="position:absolute;left:96.4px;top:418.33px;font:normal 7.5px 'Liberation Sans', sans-serif;line-height:9.75px;color:#151515;white-space:pre;transform:scaleX(0.9275);transform-origin:0 0;-webkit-text-stroke:0.15px #151515;">Hexadecimal Display (radix=16)</div>
<div style="position:absolute;left:308px;top:214.43px;font:normal 7.5px 'Liberation Sans', sans-serif;line-height:9.75px;color:#151515;white-space:pre;transform:scaleX(0.9363);transform-origin:0 0;-webkit-text-stroke:0.15px #151515;">Watch 1</div>
<div style="position:absolute;left:308px;top:228.23px;font:normal 7.5px 'Liberation Sans', sans-serif;line-height:9.75px;color:#151515;white-space:pre;transform:scaleX(0.9363);transform-origin:0 0;-webkit-text-stroke:0.15px #151515;">Watch 2</div>
<div style="position:absolute;left:308px;top:247.03px;font:normal 7.5px 'Liberation Sans', sans-serif;line-height:9.75px;color:#151515;white-space:pre;transform:scaleX(0.9147);transform-origin:0 0;-webkit-text-stroke:0.15px #151515;">Memory 1</div>
<div style="position:absolute;left:308px;top:260.83px;font:normal 7.5px 'Liberation Sans', sans-serif;line-height:9.75px;color:#151515;white-space:pre;transform:scaleX(0.9147);transform-origin:0 0;-webkit-text-stroke:0.15px #151515;">Memory 2</div>
<div style="position:absolute;left:308px;top:274.43px;font:normal 7.5px 'Liberation Sans', sans-serif;line-height:9.75px;color:#151515;white-space:pre;transform:scaleX(0.9147);transform-origin:0 0;-webkit-text-stroke:0.15px #151515;">Memory 3</div>
<div style="position:absolute;left:308px;top:288.23px;font:normal 7.5px 'Liberation Sans', sans-serif;line-height:9.75px;color:#151515;white-space:pre;transform:scaleX(0.9147);transform-origin:0 0;-webkit-text-stroke:0.15px #151515;">Memory 4</div>
<div style="position:absolute;left:308px;top:307.43px;font:normal 7.5px 'Liberation Sans', sans-serif;line-height:9.75px;color:#151515;white-space:pre;transform:scaleX(0.9079);transform-origin:0 0;-webkit-text-stroke:0.15px #151515;">Analyzer</div>
<div style="position:absolute;left:122.3px;top:84.79px;font:normal 24.6px 'Liberation Sans', sans-serif;line-height:31.98px;color:#e8503c;white-space:pre;">right clcik on distance</div>
</body></html>
